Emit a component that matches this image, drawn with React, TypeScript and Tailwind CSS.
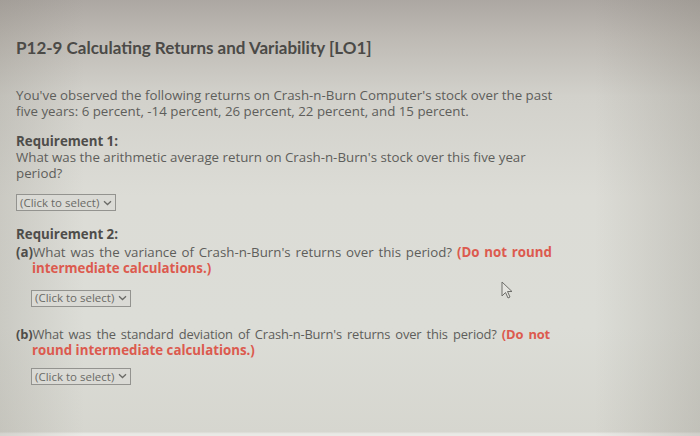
import React from "react";

function Select({ indent }: { indent?: boolean }) {
  return (
    <div className={indent ? "pl-[15px]" : ""}>
      <div className="inline-flex h-[17px] items-center border border-[#93938f] bg-[#dadad5] pl-[3px] pr-[3px] text-[11.5px] leading-none text-[#6a6a66]">
        <span>(Click to select)</span>
        <svg width="9" height="6" viewBox="0 0 9 6" className="ml-[4px]">
          <path d="M1 1.2 L4.5 4.5 L8 1.2" fill="none" stroke="#6a6a66" strokeWidth="1.3" />
        </svg>
      </div>
    </div>
  );
}

export default function App() {
  return (
    <div
      className="relative h-[436px] w-[700px] overflow-hidden"
      style={{ fontFamily: '"Open Sans", "Liberation Sans", sans-serif' }}
    >
      <div className="absolute inset-0 bg-[linear-gradient(180deg,#aca7a2_0%,#bdb9b3_8%,#d2d1cb_22%,#dcdcd6_45%,#dcddd7_75%,#d6d6cf_99%,#e9e9e5_99.5%)]" />
      <div className="absolute inset-0 bg-[linear-gradient(90deg,rgba(120,115,105,0.18)_0%,rgba(120,115,105,0)_12%,rgba(120,115,105,0)_85%,rgba(120,115,105,0.22)_100%)]" />
      <div className="relative flex flex-col pl-[16px] pr-[100px] pt-[37px] text-[13.3px] leading-[16px] text-[#5e5e5b]">
        <h1
          className="text-[17px] font-bold leading-[22px] text-[#4b4a47]"
          style={{ fontFamily: 'Lato, "Open Sans", sans-serif' }}
        >
          P12-9 Calculating Returns and Variability [LO1]
        </h1>
        <p className="mt-[28px]">
          You've observed the following returns on Crash-n-Burn Computer's stock over the past
          <br />
          five years: 6 percent, -14 percent, 26 percent, 22 percent, and 15 percent.
        </p>
        <p className="mt-[14px] font-bold text-[#4e4d4a]">Requirement 1:</p>
        <p>
          What was the arithmetic average return on Crash-n-Burn's stock over this five year
          <br />
          period?
        </p>
        <div className="mt-[13px]">
          <Select />
        </div>
        <p className="mt-[15px] font-bold text-[#4e4d4a]">Requirement 2:</p>
        <div className="mt-[2px]">
          <div className="w-[536px] text-justify [text-align-last:justify]">
            <span className="font-bold text-[#4e4d4a]">(a)</span>What was the variance of Crash-n-Burn's returns over this period?{" "}
            <span className="font-bold text-[#dc5a4e]">(Do not round</span>
          </div>
          <div className="pl-[16px] font-bold text-[#dc5a4e]">intermediate calculations.)</div>
        </div>
        <div className="mt-[13px]">
          <Select indent />
        </div>
        <div className="mt-[19px]">
          <div className="w-[534px] whitespace-nowrap text-[12.9px] tracking-[-0.15px] text-justify [text-align-last:justify]">
            <span className="font-bold text-[#4e4d4a]">(b)</span>What was the standard deviation of Crash-n-Burn's returns over this period?{" "}
            <span className="font-bold text-[#dc5a4e]">(Do not</span>
          </div>
          <div className="pl-[16px] font-bold text-[#dc5a4e]">round intermediate calculations.)</div>
        </div>
        <div className="mt-[10px]">
          <Select indent />
        </div>
      </div>
      <svg className="absolute left-[501px] top-[281px]" width="14" height="20" viewBox="0 0 14 20">
        <path d="M1 1 L1 15 L4.5 11.5 L7 17 L9 16 L6.5 10.5 L11 10.5 Z" fill="#e4e4df" stroke="#6e6e6a" strokeWidth="1" />
      </svg>
    </div>
  );
}
